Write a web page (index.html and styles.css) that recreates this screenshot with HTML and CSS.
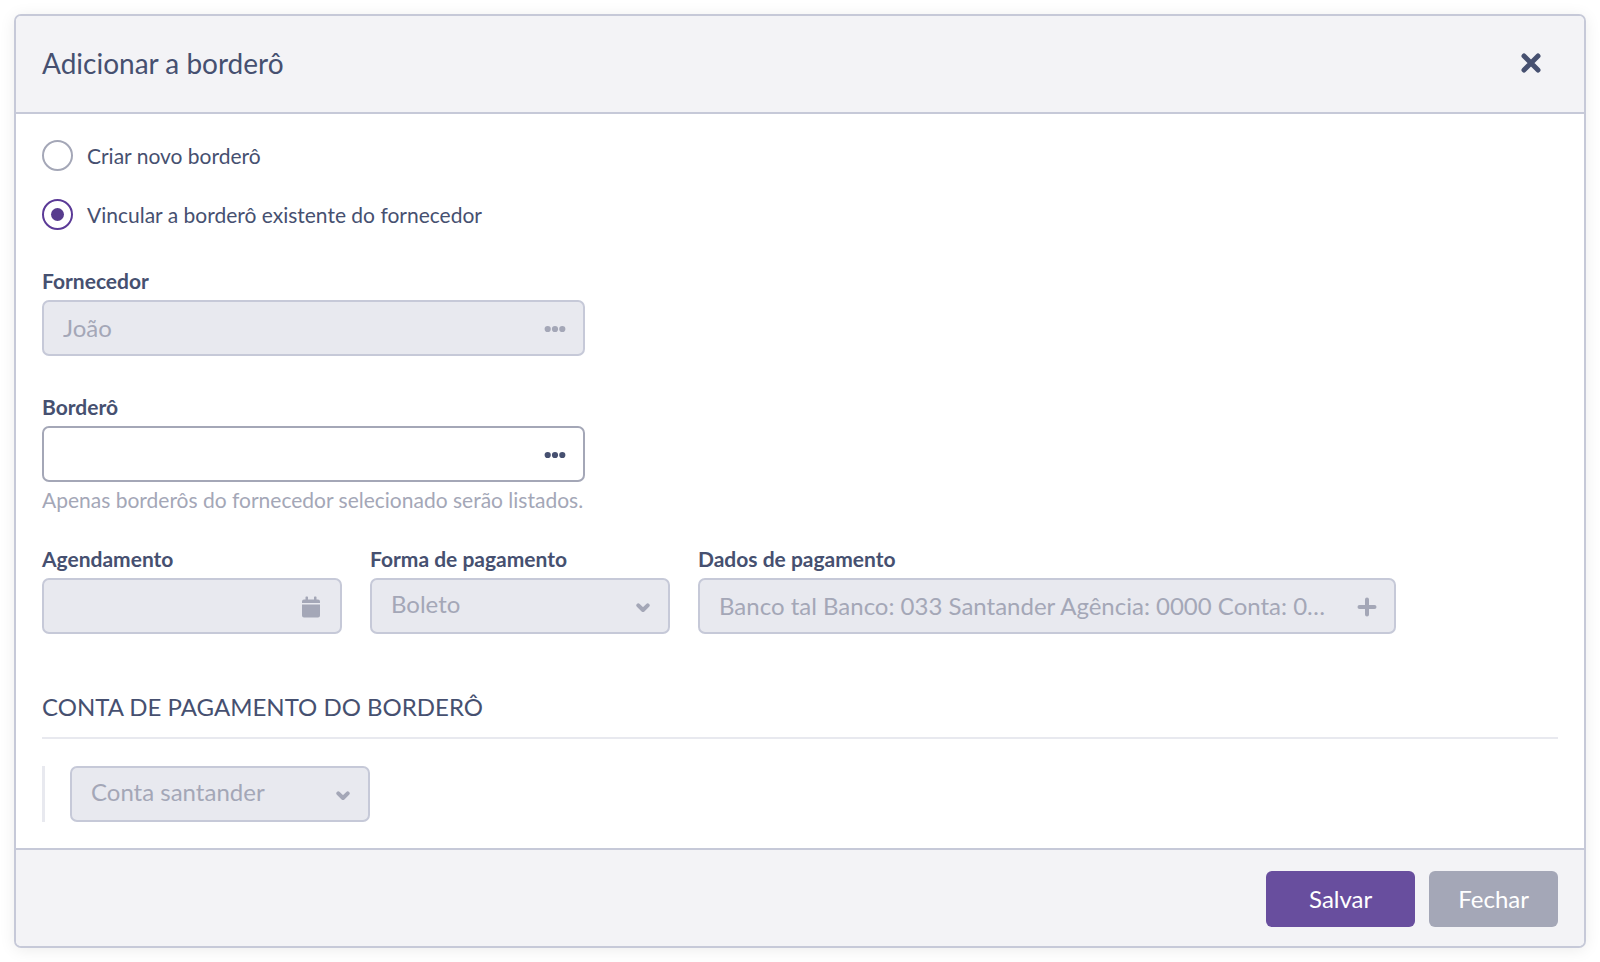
FILE: index.html
```html
<!DOCTYPE html>
<html lang="pt-BR">
<head>
    <meta charset="UTF-8">
    <meta name="viewport" content="width=device-width, initial-scale=1.0">
    <title>Adicionar a borderô</title>
    <link rel="stylesheet" href="styles.css">
</head>
<body>
    <form class="modal" role="dialog" aria-labelledby="modalTitle">
        <header class="modal-header">
            <h1 id="modalTitle">Adicionar a borderô</h1>
            <button type="button" class="close" aria-label="Fechar janela">
                <svg width="20" height="20" viewBox="0 0 20 20"><path d="M3 3l14 14M17 3L3 17"/></svg>
            </button>
        </header>

        <div class="modal-body">
            <div class="radio-group">
                <label class="radio">
                    <input type="radio" name="tipo" value="novo">
                    <span>Criar novo borderô</span>
                </label>
                <label class="radio">
                    <input type="radio" name="tipo" value="existente" checked>
                    <span>Vincular a borderô existente do fornecedor</span>
                </label>
            </div>

            <div class="field field-md">
                <label for="fornecedor">Fornecedor</label>
                <div class="control disabled">
                    <input type="text" id="fornecedor" value="João" disabled>
                    <button type="button" aria-label="Buscar fornecedor" disabled>
                        <svg width="22" height="8" viewBox="0 0 22 8"><circle cx="3.700" cy="4" r="3.100"/><circle cx="11" cy="4" r="3.100"/><circle cx="18.300" cy="4" r="3.100"/></svg>
                    </button>
                </div>
            </div>

            <div class="field field-md">
                <label for="bordero">Borderô</label>
                <div class="control">
                    <input type="text" id="bordero">
                    <button type="button" aria-label="Buscar borderô">
                        <svg width="22" height="8" viewBox="0 0 22 8"><circle cx="3.700" cy="4" r="3.100"/><circle cx="11" cy="4" r="3.100"/><circle cx="18.300" cy="4" r="3.100"/></svg>
                    </button>
                </div>
                <p class="hint">Apenas borderôs do fornecedor selecionado serão listados.</p>
            </div>

            <div class="row">
                <div class="field field-sm">
                    <label for="agendamento">Agendamento</label>
                    <div class="control disabled">
                        <input type="text" id="agendamento" disabled>
                        <button type="button" aria-label="Abrir calendário" disabled>
                            <svg width="22" height="22" viewBox="0 0 22 22"><path d="M1 7V5.500a2 2 0 0 1 2-2h1.500V1.200a.7.7 0 0 1 .7-.7h1.100a.7.7 0 0 1 .7.7v2.300h6V1.200a.7.7 0 0 1 .7-.7h1.100a.7.7 0 0 1 .7.7v2.300H17a2 2 0 0 1 2 2V7zM1 8.500h18V19.500a2 2 0 0 1-2 2H3a2 2 0 0 1-2-2z"/></svg>
                        </button>
                    </div>
                </div>
                <div class="field field-sm">
                    <label for="forma">Forma de pagamento</label>
                    <div class="control disabled">
                        <select id="forma" disabled>
                            <option>Boleto</option>
                        </select>
                        <svg class="chevron" width="14" height="10" viewBox="0 0 14 10"><path d="M2.300 2.300L7 7l4.700-4.700"/></svg>
                    </div>
                </div>
                <div class="field field-lg">
                    <label for="dados">Dados de pagamento</label>
                    <div class="control disabled">
                        <input type="text" id="dados" value="Banco tal Banco: 033 Santander Agência: 0000 Conta: 00000-0" disabled>
                        <button type="button" aria-label="Adicionar dados de pagamento" disabled>
                            <svg class="plus" width="20" height="20" viewBox="0 0 20 20"><path d="M10 2.500v15M2.500 10h15"/></svg>
                        </button>
                    </div>
                </div>
            </div>

            <h2>Conta de pagamento do borderô</h2>
            <div class="group">
                <div class="field-sm">
                    <div class="control disabled">
                        <select aria-label="Conta de pagamento" disabled>
                            <option>Conta santander</option>
                        </select>
                        <svg class="chevron" width="14" height="10" viewBox="0 0 14 10"><path d="M2.300 2.300L7 7l4.700-4.700"/></svg>
                    </div>
                </div>
            </div>
        </div>

        <footer class="modal-footer">
            <button type="submit" class="btn btn-primary">Salvar</button>
            <button type="button" class="btn btn-secondary">Fechar</button>
        </footer>
    </form>
</body>
</html>
```

FILE: styles.css
```css
:root {
    --text-color: #465070;
    --muted-color: #a4a7b7;
    --border-color: #c6c9d8;
    --panel-color: #f3f3f6;
    --disabled-color: #e8e9ef;
    --primary-color: #684e9e;
}
* {
    box-sizing: border-box;
}
body {
    margin: 0;
    padding: 14px;
    font-family: Lato, "Liberation Sans", sans-serif;
    font-size: 21px;
    line-height: 28px;
    color: var(--text-color);
    background-color: white;
}
.modal {
    border: 2px solid var(--border-color);
    border-radius: 7px;
    background-color: white;
    box-shadow: 0 2px 16px rgba(0, 0, 0, 0.08);
    overflow: hidden;
}
.modal-header {
    display: flex;
    align-items: center;
    justify-content: space-between;
    height: 98px;
    padding: 0 43px 2px 26px;
    border-bottom: 2px solid var(--border-color);
    background-color: var(--panel-color);
}
h1 {
    margin: 0;
    font-size: 28px;
    font-weight: 400;
    line-height: 36px;
}
button {
    padding: 0;
    border: none;
    background: none;
    font-family: inherit;
    color: inherit;
    cursor: pointer;
}
button:disabled {
    cursor: default;
}
svg {
    display: block;
    fill: currentColor;
}
.close svg {
    stroke: currentColor;
    stroke-width: 5;
    stroke-linecap: round;
}
.modal-body {
    padding: 26px;
}
.radio-group {
    display: flex;
    flex-direction: column;
    align-items: flex-start;
    gap: 28px;
    margin-bottom: 37px;
}
.radio {
    display: flex;
    align-items: center;
    gap: 14px;
    height: 31px;
    cursor: pointer;
}
.radio input {
    appearance: none;
    display: grid;
    place-items: center;
    width: 31px;
    height: 31px;
    margin: 0;
    border: 2px solid var(--muted-color);
    border-radius: 50%;
}
.radio input:checked {
    border-color: #5b3a97;
}
.radio input:checked::before {
    content: "";
    width: 13px;
    height: 13px;
    border-radius: 50%;
    background-color: #573c8e;
}
.field label {
    display: block;
    margin-bottom: 5px;
    font-weight: 700;
}
.field-sm {
    width: 300px;
}
.field-md {
    width: 543px;
    max-width: 100%;
    margin-bottom: 37px;
}
.field-lg {
    width: 698px;
    min-width: 0;
}
.control {
    position: relative;
    display: flex;
    align-items: center;
    height: 56px;
    border: 2px solid var(--muted-color);
    border-radius: 7px;
    background-color: white;
}
.control.disabled {
    border-color: var(--border-color);
    background-color: var(--disabled-color);
    color: var(--muted-color);
}
.control input, .control select {
    flex: 1;
    min-width: 0;
    height: 100%;
    margin: 0;
    padding: 0 19px 2px;
    border: none;
    outline: none;
    background: none;
    font-family: inherit;
    font-size: 24px;
    color: inherit;
    opacity: 1;
    text-overflow: ellipsis;
}
.control input {
    padding-right: 22px;
}
.control select {
    appearance: none;
    padding-bottom: 6px;
}
.control button {
    margin-right: 17px;
    padding-top: 2px;
}
.chevron {
    position: absolute;
    right: 18px;
    top: 23px;
    pointer-events: none;
}
.chevron path {
    fill: none;
    stroke: currentColor;
    stroke-width: 4;
    stroke-linecap: round;
    stroke-linejoin: round;
}
.plus {
    stroke: currentColor;
    stroke-width: 4;
    stroke-linecap: round;
}
.hint {
    margin: 4px 0 0;
    color: var(--muted-color);
}
.field-md + .row {
    margin-top: -6px;
}
.row {
    display: flex;
    gap: 28px;
}
h2 {
    margin: 56px 0 27px;
    padding-bottom: 13px;
    border-bottom: 2px solid var(--disabled-color);
    font-size: 24px;
    font-weight: 400;
    line-height: 34px;
    text-transform: uppercase;
}
.group {
    padding-left: 25px;
    border-left: 3px solid var(--disabled-color);
}
.modal-footer {
    display: flex;
    justify-content: flex-end;
    gap: 14px;
    padding: 21px 26px 19px;
    border-top: 2px solid var(--border-color);
    background-color: var(--panel-color);
}
.btn {
    height: 56px;
    padding-bottom: 2px;
    border-radius: 6px;
    font-size: 24px;
    color: white;
}
.btn-primary {
    padding-left: 43px;
    padding-right: 43px;
    background-color: var(--primary-color);
}
.btn-secondary {
    padding-left: 29px;
    padding-right: 29px;
    background-color: var(--muted-color);
}
```
